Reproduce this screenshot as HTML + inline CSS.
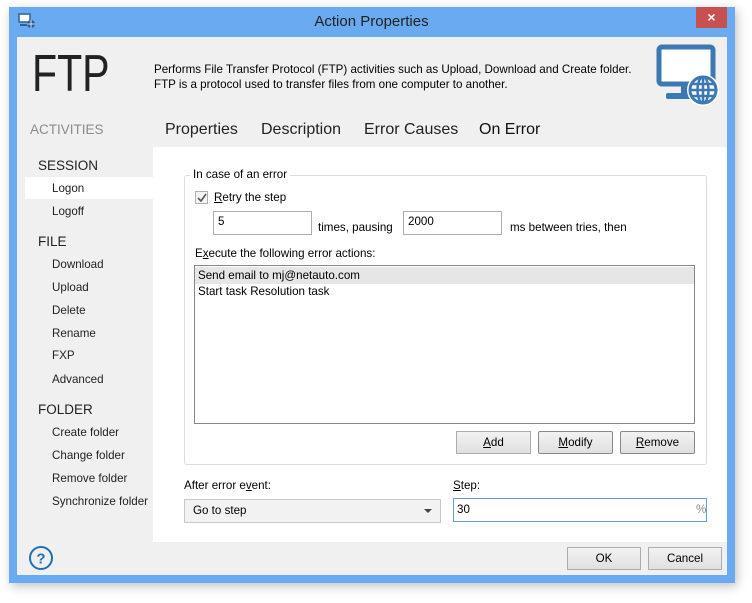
<!DOCTYPE html>
<html><head><meta charset="utf-8"><style>
*{margin:0;padding:0;box-sizing:border-box}
body{width:752px;height:603px;background:#fff;font-family:"Liberation Sans",sans-serif;font-size:11.6px;color:#000;position:relative;overflow:hidden}
.a{position:absolute;white-space:nowrap}
.win{position:absolute;left:9px;top:7px;width:726px;height:576px;background:#6aaaf0;box-shadow:2px 3px 10px rgba(0,0,0,.25)}
.client{position:absolute;left:17px;top:37px;width:710px;height:538px;background:#f0f0f0}
.white{position:absolute;left:153px;top:147px;width:574px;height:395px;background:#fff}
.inp{position:absolute;background:#fff;border:1px solid #abadb3;padding:3px 4px;font-size:11.6px}
.btn{position:absolute;height:23px;border:1px solid #acacac;background:linear-gradient(#f2f2f2,#e0e0e0);text-align:center;line-height:21px;font-size:11.6px}
.side{font-size:11.6px;color:#222}
.hd{font-size:13.5px;color:#222}
.tab{font-size:16px;color:#222;top:121px}
u{text-decoration:underline}
</style></head><body>
<div class="win"></div>
<svg class="a" style="left:18px;top:13px" width="18" height="16" viewBox="0 0 18 16"><rect x="1" y="1" width="11" height="8" fill="#fff" stroke="#2f5f9a" stroke-width="1.5"/><rect x="2" y="11" width="7" height="2" fill="#2f5f9a"/><circle cx="13" cy="11" r="4" fill="#2f5f9a"/><path d="M9 11h8M13 7v8" stroke="#fff" stroke-width=".8"/></svg>
<div class="a" style="left:0;width:743px;top:13px;text-align:center;font-size:15px;color:#222">Action Properties</div>
<div class="a" style="left:696px;top:7px;width:31px;height:21px;background:#c75050;color:#fff;text-align:center;font-size:14px;line-height:21px;font-weight:bold">×</div>
<div class="client"></div>
<div class="white"></div>
<div class="a" style="left:32px;top:44px;font-size:52px;line-height:60px;color:#222;transform:scaleX(.79);transform-origin:left top">FTP</div>
<div class="a" style="left:154px;top:62px;line-height:15px">Performs File Transfer Protocol (FTP) activities such as Upload, Download and Create folder.<br>FTP is a protocol used to transfer files from one computer to another.</div>
<svg class="a" style="left:656px;top:44px" width="64" height="64" viewBox="0 0 64 64"><rect x="3" y="3" width="54" height="37" rx="3" fill="#fff" stroke="#3c78b4" stroke-width="5"/><rect x="25" y="41" width="10" height="8" fill="#3c78b4"/><rect x="10" y="49" width="30" height="6" rx="2" fill="#3c78b4"/><circle cx="47" cy="46" r="16" fill="#fff"/><circle cx="47" cy="46" r="13" fill="#fff" stroke="#3c78b4" stroke-width="3"/><ellipse cx="47" cy="46" rx="5.5" ry="13" fill="none" stroke="#3c78b4" stroke-width="2.5"/><path d="M34 46h26M47 33v26M36 40h22M36 52h22" stroke="#3c78b4" stroke-width="2.5"/></svg>
<div class="a" style="left:30px;top:122px;font-size:13.5px;color:#8a8a8a">ACTIVITIES</div>
<div class="a tab" style="left:165px">Properties</div>
<div class="a tab" style="left:261px">Description</div>
<div class="a tab" style="left:364px">Error Causes</div>
<div class="a tab" style="left:479px;color:#111">On Error</div>
<div class="a" style="left:25px;top:177px;width:128px;height:22px;background:#fff"></div>
<div class="a hd" style="left:38px;top:158px">SESSION</div>
<div class="a side" style="left:52px;top:182px">Logon</div>
<div class="a side" style="left:52px;top:205px">Logoff</div>
<div class="a hd" style="left:38px;top:234px">FILE</div>
<div class="a side" style="left:52px;top:258px">Download</div>
<div class="a side" style="left:52px;top:281px">Upload</div>
<div class="a side" style="left:52px;top:304px">Delete</div>
<div class="a side" style="left:52px;top:327px">Rename</div>
<div class="a side" style="left:52px;top:349px">FXP</div>
<div class="a side" style="left:52px;top:373px">Advanced</div>
<div class="a hd" style="left:38px;top:402px">FOLDER</div>
<div class="a side" style="left:52px;top:426px">Create folder</div>
<div class="a side" style="left:52px;top:449px">Change folder</div>
<div class="a side" style="left:52px;top:472px">Remove folder</div>
<div class="a side" style="left:52px;top:495px">Synchronize folder</div>
<div class="a" style="left:184px;top:175px;width:523px;height:290px;border:1px solid #dcdcdc;border-radius:3px"></div>
<div class="a" style="left:190px;top:168px;background:#fff;padding:0 3px">In case of an error</div>
<div class="a" style="left:195px;top:191px;width:13px;height:13px;border:1px solid #b0b0b0;background:#f4f4f4"></div>
<svg class="a" style="left:196px;top:192px" width="11" height="11"><path d="M2 6l3 3 5-7" stroke="#555" stroke-width="1.6" fill="none"/></svg>
<div class="a" style="left:214px;top:191px"><u>R</u>etry the step</div>
<div class="inp" style="left:213px;top:211px;width:99px;height:24px">5</div>
<div class="a" style="left:318px;top:221px">times, pausing</div>
<div class="inp" style="left:403px;top:211px;width:99px;height:24px">2000</div>
<div class="a" style="left:510px;top:221px">ms between tries, then</div>
<div class="a" style="left:195px;top:247px">E<u>x</u>ecute the following error actions:</div>
<div class="a" style="left:194px;top:265px;width:501px;height:159px;border:1px solid #828790;background:#fff"></div>
<div class="a" style="left:195px;top:267px;width:499px;height:17px;background:#e6e6e6"></div>
<div class="a" style="left:198px;top:269px">Send email to mj@netauto.com</div>
<div class="a" style="left:198px;top:285px">Start task Resolution task</div>
<div class="btn" style="left:456px;top:431px;width:75px"><u>A</u>dd</div>
<div class="btn" style="left:538px;top:431px;width:75px;border-color:#8a8a8a;border-radius:2px"><u>M</u>odify</div>
<div class="btn" style="left:620px;top:431px;width:75px;border-color:#8a8a8a;border-radius:2px"><u>R</u>emove</div>
<div class="a" style="left:184px;top:479px">After error e<u>v</u>ent:</div>
<div class="a" style="left:184px;top:499px;width:257px;height:24px;border:1px solid #c8c8c8;background:#f2f2f2;padding:4px 8px">Go to step</div>
<div class="a" style="left:424px;top:509px;width:0;height:0;border-left:4px solid transparent;border-right:4px solid transparent;border-top:4px solid #444"></div>
<div class="a" style="left:453px;top:479px"><u>S</u>tep:</div>
<div class="inp" style="left:453px;top:498px;width:254px;height:24px;border-color:#5a9ee0;padding:4px 3px">30</div>
<div class="a" style="left:696px;top:503px;color:#888">%</div>
<svg class="a" style="left:28px;top:545px" width="26" height="26"><circle cx="13" cy="13" r="11" fill="none" stroke="#1f6fb8" stroke-width="2"/><text x="13" y="18.5" text-anchor="middle" font-family="Liberation Sans" font-weight="bold" font-size="15" fill="#1f6fb8">?</text></svg>
<div class="btn" style="left:567px;top:547px;width:74px">OK</div>
<div class="btn" style="left:648px;top:547px;width:74px">Cancel</div>
</body></html>
